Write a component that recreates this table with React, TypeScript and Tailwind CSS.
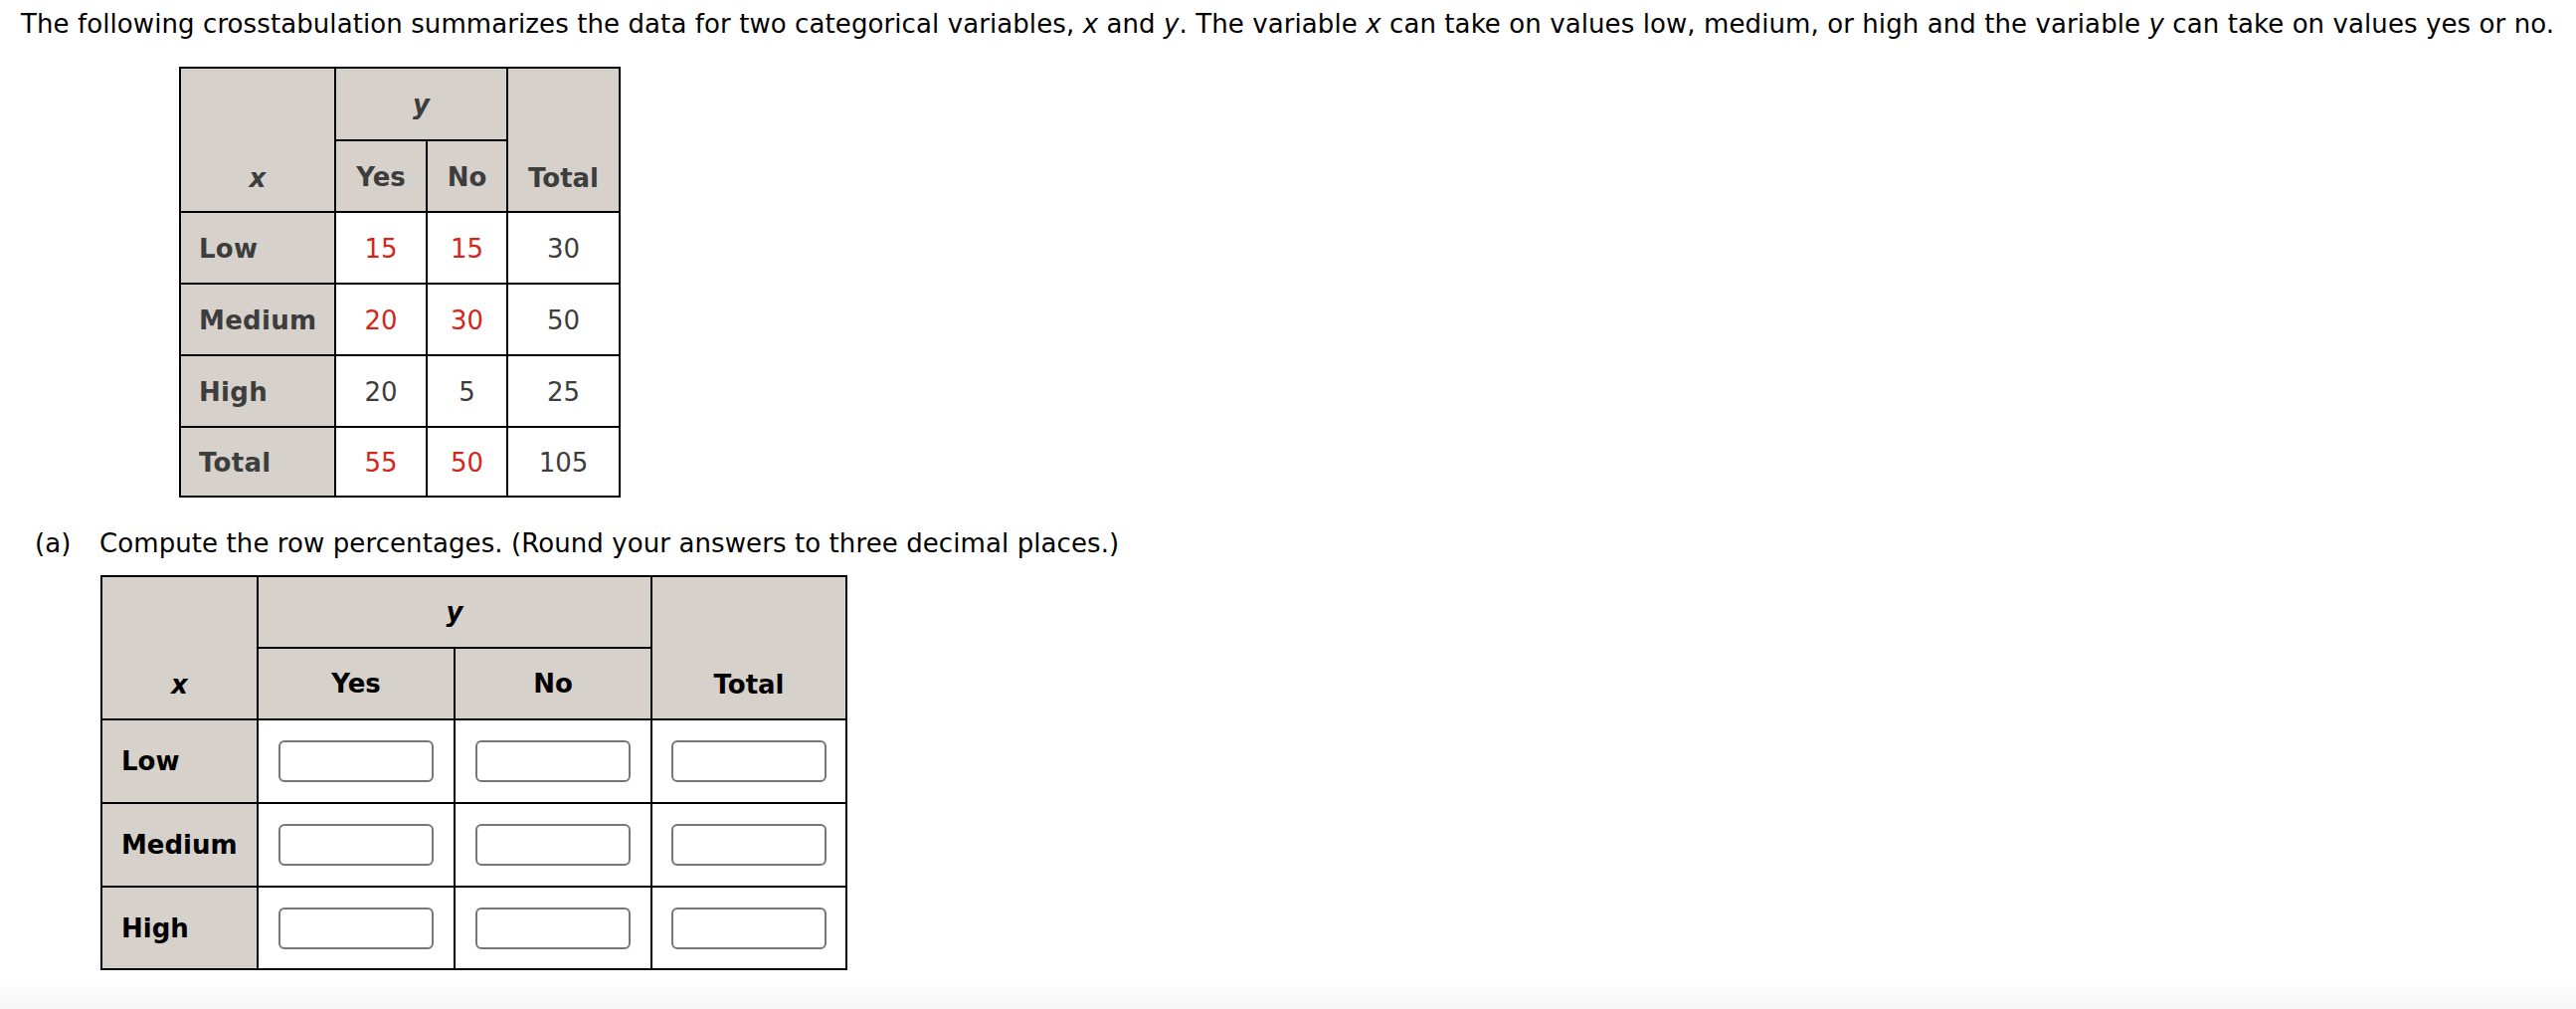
const dataAwal = [
  { label: "Low", yes: "15", no: "15", total: "30", merahYes: true, merahNo: true },
  { label: "Medium", yes: "20", no: "30", total: "50", merahYes: true, merahNo: true },
  { label: "High", yes: "20", no: "5", total: "25", merahYes: false, merahNo: false },
  { label: "Total", yes: "55", no: "50", total: "105", merahYes: true, merahNo: true },
];

const barisPersen = ["Low", "Medium", "High"];

// header abu-abu khas WebAssign
const kepala = "flex items-center justify-center bg-[#d6d2cb] font-bold";

function TabelAwal() {
  return (
    <div className="grid w-fit grid-cols-[154px_90px_79px_111px] grid-rows-[71px_70px_70px_70px_70px_68px] gap-[2px] border-2 border-black bg-black text-[#3d3d3d]">
      <div className={`${kepala} row-span-2 items-end pb-[17px] italic`}>x</div>
      <div className={`${kepala} col-span-2 italic`}>y</div>
      <div className={`${kepala} row-span-2 items-end pb-[17px]`}>Total</div>
      <div className={`${kepala} pt-[2px]`}>Yes</div>
      <div className={`${kepala} pt-[2px]`}>No</div>
      {dataAwal.map((b) => (
        <Baris key={b.label} {...b} />
      ))}
    </div>
  );
}

function Baris({
  label,
  yes,
  no,
  total,
  merahYes,
  merahNo,
}: {
  label: string;
  yes: string;
  no: string;
  total: string;
  merahYes: boolean;
  merahNo: boolean;
}) {
  return (
    <>
      <div className="flex items-center bg-[#d6d2cb] pl-[18px] pt-[2px] font-bold tracking-[0.3px]">{label}</div>
      <div className={`flex items-center justify-center bg-white pt-[2px] ${merahYes ? "text-[#d3271b]" : ""}`}>{yes}</div>
      <div className={`flex items-center justify-center bg-white pt-[2px] ${merahNo ? "text-[#d3271b]" : ""}`}>{no}</div>
      <div className="flex items-center justify-center bg-white pt-[2px]">{total}</div>
    </>
  );
}

function Isian() {
  return (
    <input
      type="text"
      className="h-[42px] w-[156px] rounded-[6px] border-2 border-[#767676] bg-white outline-none"
    />
  );
}

function TabelPersen() {
  return (
    <div className="grid w-fit grid-cols-[155px_196px_196px_194px] grid-rows-[70px_70px_82px_82px_81px] gap-[2px] border-2 border-black bg-black text-black">
      <div className={`${kepala} row-span-2 items-end pb-[18px] italic`}>x</div>
      <div className={`${kepala} col-span-2 italic`}>y</div>
      <div className={`${kepala} row-span-2 items-end pb-[18px]`}>Total</div>
      <div className={kepala}>Yes</div>
      <div className={kepala}>No</div>
      {barisPersen.map((label) => (
        <div key={label} className="contents">
          <div className="flex items-center bg-[#d6d2cb] pl-[19px] font-bold">{label}</div>
          <div className="flex items-center justify-center bg-white">
            <Isian />
          </div>
          <div className="flex items-center justify-center bg-white">
            <Isian />
          </div>
          <div className="flex items-center justify-center bg-white">
            <Isian />
          </div>
        </div>
      ))}
    </div>
  );
}

export default function App() {
  return (
    <div
      className="flex h-[1014px] flex-col bg-white text-[26px] leading-[32px] text-black"
      style={{ fontFamily: '"DejaVu Sans", Verdana, sans-serif' }}
    >
      <p className="pl-[21px] pt-[8px] whitespace-nowrap tracking-[0.09px]">
        The following crosstabulation summarizes the data for two categorical variables, <i>x</i> and{" "}
        <i>y</i>. The variable <i>x</i> can take on values low, medium, or high and the variable <i>y</i>{" "}
        can take on values yes or no.
      </p>

      <div className="ml-[180px] mt-[27px]">
        <TabelAwal />
      </div>

      <div className="mt-[30px] flex tracking-[0.09px]">
        <span className="w-[100px] pl-[35px]">(a)</span>
        <span>Compute the row percentages. (Round your answers to three decimal places.)</span>
      </div>

      <div className="ml-[101px] mt-[16px]">
        <TabelPersen />
      </div>

      <div className="mt-auto h-[32px] bg-linear-to-b from-white to-[#f6f6f6]" />
    </div>
  );
}
